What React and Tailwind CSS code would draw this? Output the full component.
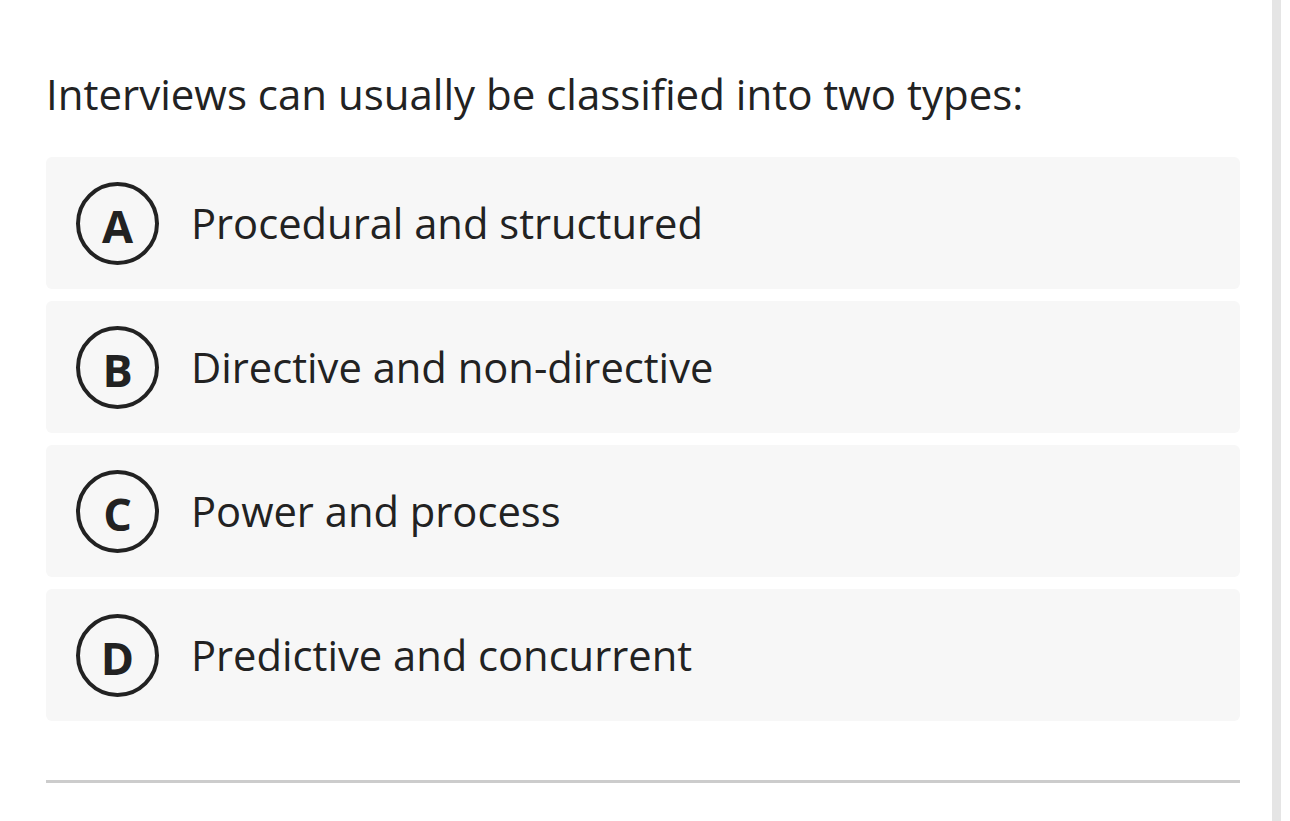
export default function App() {
  const options = [
    ["A", "Procedural and structured"],
    ["B", "Directive and non-directive"],
    ["C", "Power and process"],
    ["D", "Predictive and concurrent"],
  ];
  return (
    <div className="flex h-[821px] w-[1290px] overflow-hidden bg-white" style={{ fontFamily: '"Open Sans", sans-serif' }}>
      <div className="flex w-[1272px] flex-col pl-[46px] pr-[32px]">
        <div className="mt-[64px] text-[42px] leading-[60px] text-[#222222]">
          Interviews can usually be classified into two types:
        </div>
        <div className="mt-[33px] flex flex-col gap-[12px]">
          {options.map(([l, t]) => (
            <div key={l} className="flex h-[132px] items-center rounded-[6px] bg-[#f7f7f7] pl-[30px]">
              <div className="flex h-[83px] w-[83px] items-center justify-center rounded-full border-[4px] border-[#222222] pt-[4px] text-[45px] font-bold leading-none text-[#222222]">
                {l}
              </div>
              <div className="ml-[32px] text-[41.7px] text-[#222222]">{t}</div>
            </div>
          ))}
        </div>
        <div className="mt-[59px] h-[3px] bg-[#cccccc]" />
      </div>
      <div className="h-full w-[9px] bg-[#e5e5e5]" />
    </div>
  );
}
